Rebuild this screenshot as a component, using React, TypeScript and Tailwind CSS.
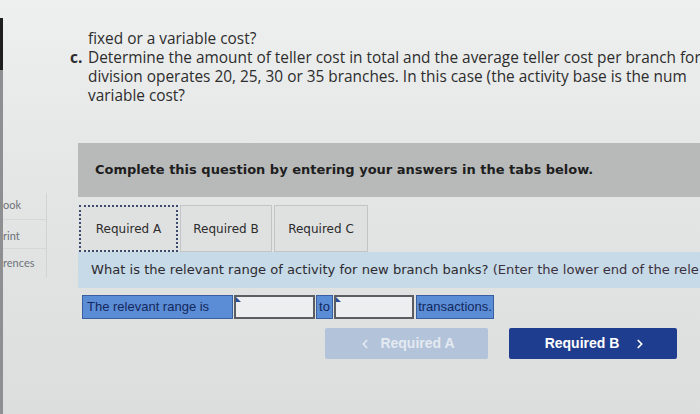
import { ChevronLeft, ChevronRight } from "lucide-react";

const tabs = ["Required A", "Required B", "Required C"];

const bodyFont = "font-['Open_Sans','Lato',sans-serif]";
const verdana = "font-['DejaVu_Sans','Verdana',sans-serif]";
const arial = "font-['Liberation_Sans','Arial',sans-serif]";

function AnswerInput({ width }: { width: string }) {
  return (
    <div className={`relative h-full ${width} border-2 border-[#5a5d62] bg-[#eceef0]`}>
      <span className="absolute left-0 top-0 h-0 w-0 border-l-[5px] border-t-[5px] border-l-[#2a4f9a] border-t-transparent" />
    </div>
  );
}

export default function App() {
  return (
    <div className="flex h-[414px] w-[700px] overflow-hidden bg-gradient-to-b from-[#eeefef] via-[#e3e5e5] to-[#dcdede]">
      {/* left edge of the screen */}
      <div className="flex w-[3px] shrink-0 flex-col">
        <div className="mt-[18px] h-[52px] bg-[#1e1e1e]" />
        <div className="flex-1 bg-[#8d8f90]" />
      </div>

      {/* clipped side menu */}
      <div className="w-[67px] shrink-0 pt-[193px]">
        <div className="w-[44px] border-r border-[#d2d4d4] font-['Lato','Open_Sans',sans-serif] text-[11px] text-[#6d7278]">
          <div className="h-[27px] border-b border-[#d6d8d8] pt-[4px]">ook</div>
          <div className="h-[29px] border-b border-[#d6d8d8] pt-[8px]">rint</div>
          <div className="h-[28px] pt-[6px]">rences</div>
        </div>
      </div>

      {/* main column */}
      <div className="flex min-w-0 flex-1 flex-col">
        <div className={`overflow-hidden pt-[29px] ${bodyFont} text-[15.4px] leading-[19px] text-[#2d2d2d]`}>
          <p className="whitespace-nowrap pl-[18px]">fixed or a variable cost?</p>
          <div className="flex">
            <span className="w-[18px] shrink-0 font-bold">c.</span>
            <div className="whitespace-nowrap">
              <p>Determine the amount of teller cost in total and the average teller cost per branch for</p>
              <p>division operates 20, 25, 30 or 35 branches. In this case (the activity base is the num</p>
              <p>variable cost?</p>
            </div>
          </div>
        </div>

        <div className="ml-[8px] mt-[38px]">
          <div className="flex h-[54px] items-center bg-[#b8baba] pl-[17px]">
            <p className={`${verdana} whitespace-nowrap text-[13px] font-bold text-[#1e1e1e]`}>
              Complete this question by entering your answers in the tabs below.
            </p>
          </div>

          <div className="mt-[8px] flex h-[47px] items-stretch gap-[2px] pl-[1px]">
            {tabs.map((tab, i) => (
              <div
                key={tab}
                className={`flex items-center justify-center bg-[#dfe0e0] ${verdana} text-[12px] text-[#2c2c2c] ${
                  i === 0
                    ? "w-[99px] border-2 border-dotted border-[#3b4a6e]"
                    : i === 1
                    ? "w-[92px] border border-[#c3c5c5]"
                    : "w-[94px] border border-[#c3c5c5]"
                }`}
              >
                {tab}
              </div>
            ))}
          </div>

          <div className="flex h-[36px] items-center overflow-hidden bg-[#c6dbe7] pl-[13px]">
            <p className={`${verdana} whitespace-nowrap text-[13.1px] text-[#2e2a30]`}>
              What is the relevant range of activity for new branch banks?{" "}
              <span className="text-[#3d3040]">(Enter the lower end of the rele</span>
            </p>
          </div>

          <div className="ml-[4px] mt-[7px] flex h-[24px] items-stretch gap-[1px] text-[13px]">
            <div className={`flex w-[151px] items-center border border-[#3a5f9e] bg-[#5b8dd6] pl-[4px] ${arial} text-[#13285c]`}>
              The relevant range is
            </div>
            <AnswerInput width="w-[81px]" />
            <div className={`flex w-[17px] items-center justify-center border border-[#3a5f9e] bg-[#5b8dd6] ${arial} text-[#13285c]`}>
              to
            </div>
            <AnswerInput width="w-[80px]" />
            <div className={`ml-[1px] flex w-[78px] items-center justify-center border border-[#3a5f9e] bg-[#5b8dd6] ${arial} text-[#13285c]`}>
              transactions.
            </div>
          </div>

          <div className={`mt-[9px] flex h-[31px] gap-[21px] pl-[247px] ${arial} text-[14px] font-bold`}>
            <button
              type="button"
              disabled
              className="flex w-[163px] items-center justify-center gap-[8px] rounded-[2px] bg-[#b3c3d9] text-[#e4eaf2]"
            >
              <ChevronLeft className="h-[14px] w-[14px]" strokeWidth={3} />
              Required A
            </button>
            <button
              type="button"
              className="flex w-[168px] items-center justify-center gap-[14px] rounded-[2px] bg-[#1f3d8e] pl-[6px] text-white"
            >
              Required B
              <ChevronRight className="h-[14px] w-[14px]" strokeWidth={3} />
            </button>
          </div>
        </div>
      </div>
    </div>
  );
}
